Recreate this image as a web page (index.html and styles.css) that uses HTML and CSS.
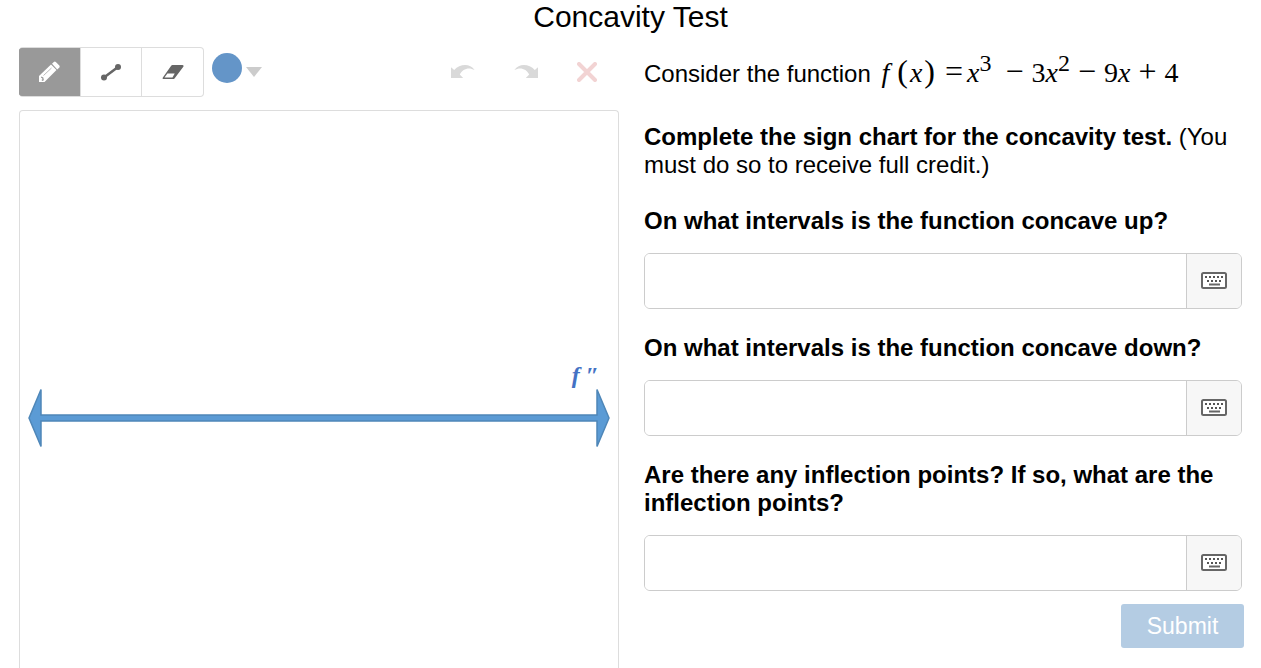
FILE: index.html
```html
<!DOCTYPE html>
<html lang="en">
<head>
    <meta charset="UTF-8">
    <meta name="viewport" content="width=device-width, initial-scale=1.0">
    <title>Concavity Test</title>
    <link rel="stylesheet" href="styles.css">
</head>
<body>
    <svg class="defs" aria-hidden="true">
        <symbol id="keyboard" viewBox="0 0 26 18">
            <rect x="1" y="1" width="24" height="15" rx="1.5" fill="#fff" stroke="#666" stroke-width="2"/>
            <path d="M4 5h18" stroke="#555" stroke-width="2" stroke-dasharray="2 2"/>
            <path d="M6 9h14" stroke="#555" stroke-width="2" stroke-dasharray="2 2"/>
            <path d="M8 12.5h11" stroke="#666" stroke-width="2"/>
        </symbol>
    </svg>

    <h1>Concavity Test</h1>

    <main class="columns">
        <section class="sketch">
            <div class="toolbar">
                <div class="tools">
                    <button type="button" class="tool active" aria-label="Pencil">
                        <svg width="22" height="22" viewBox="0 0 22 22">
                            <path d="M1 15 13 3.500 18.500 9 6.500 21H1z" fill="#fff"/>
                            <path d="M14 2.700 15.800 1q1-.8 2 0l3.500 3.500q.8 1 0 2l-2 2z" fill="#fff"/>
                            <path d="M5.500 14.500 13.500 7" stroke="#bbb" stroke-width="1"/>
                            <path d="m3.200 16 1.600 1 .4 1.800-1.400.6" fill="none" stroke="#999" stroke-width="1.200"/>
                        </svg>
                    </button>
                    <button type="button" class="tool" aria-label="Line">
                        <svg width="22" height="22" viewBox="0 0 22 22">
                            <path d="M4 16.500 18 6" stroke="#666" stroke-width="2.600"/>
                            <circle cx="4" cy="16.500" r="3" fill="#666"/>
                            <circle cx="18" cy="6" r="3" fill="#666"/>
                        </svg>
                    </button>
                    <button type="button" class="tool" aria-label="Eraser">
                        <svg width="22" height="22" viewBox="0 0 22 22">
                            <path d="M10.500 4h10q1.500 0 1 1.500L12.500 17.500Q12 18 11 18H1.500Q0 18 .7 16.700L9 5q.6-1 1.500-1z" fill="#666"/>
                            <path d="M5.400 12.500h7.300L10.500 16.500H2.500z" fill="#fff"/>
                        </svg>
                    </button>
                </div>
                <button type="button" class="color" aria-label="Color">
                    <span class="swatch"></span>
                    <span class="caret"></span>
                </button>
                <div class="history">
                    <button type="button" class="plain" aria-label="Undo">
                        <svg width="24" height="14" viewBox="0 0 24 14">
                            <path d="M0 2.300 3.200 5C9-1.300 19-1.800 23.600 5 18 1.700 11.500 3.600 8.800 9.500L12.200 13H0z" fill="#d9d9d9"/>
                        </svg>
                    </button>
                    <button type="button" class="plain" aria-label="Redo">
                        <svg width="24" height="14" viewBox="0 0 24 14">
                            <path d="M24 2.300 20.800 5C15-1.300 5-1.800.4 5 6 1.700 12.500 3.600 15.200 9.500L11.800 13H24z" fill="#d9d9d9"/>
                        </svg>
                    </button>
                    <button type="button" class="plain" aria-label="Clear">
                        <svg width="20" height="20" viewBox="0 0 20 20">
                            <path d="m2 2 16 16M18 2 2 18" stroke="#f2d3d3" stroke-width="4" stroke-linecap="round"/>
                        </svg>
                    </button>
                </div>
            </div>
            <div class="canvas">
                <div class="fn-label">f <span class="prime">″</span></div>
                <svg class="axis" viewBox="0 0 582 60" role="img" aria-label="Number line">
                    <path d="M1 30 13 1.500V27H569V1.500L581 30 569 58.500V33H13V58.500z" fill="#5b9bd5" stroke="#4f87b8" stroke-width="1.500"/>
                </svg>
            </div>
        </section>

        <form class="questions">
            <p class="prompt">Consider the function
                <span class="math"><i class="f">f</i><span class="paren">(</span><i>x</i><span class="paren">)</span><span class="op eq">=</span><i>x</i><sup>3</sup><span class="op wide">−</span>3<i>x</i><sup>2</sup><span class="op">−</span>9<i>x</i><span class="op">+</span>4</span>
            </p>
            <p class="directions"><b>Complete the sign chart for the concavity test.</b> (You must do so to receive full credit.)</p>

            <label for="up">On what intervals is the function concave up?</label>
            <div class="answer">
                <input type="text" id="up">
                <button type="button" aria-label="Keyboard"><svg width="26" height="18"><use href="#keyboard"/></svg></button>
            </div>

            <label for="down">On what intervals is the function concave down?</label>
            <div class="answer">
                <input type="text" id="down">
                <button type="button" aria-label="Keyboard"><svg width="26" height="18"><use href="#keyboard"/></svg></button>
            </div>

            <label for="points">Are there any inflection points? If so, what are the inflection points?</label>
            <div class="answer">
                <input type="text" id="points">
                <button type="button" aria-label="Keyboard"><svg width="26" height="18"><use href="#keyboard"/></svg></button>
            </div>

            <button type="submit" class="submit" disabled>Submit</button>
        </form>
    </main>
</body>
</html>
```

FILE: styles.css
```css
* {
    box-sizing: border-box;
}

body {
    display: flex;
    flex-direction: column;
    height: 100vh;
    margin: 0;
    overflow: hidden;
    background: #fff;
    color: #000;
    font-family: "Liberation Sans", Arial, sans-serif;
    font-size: 24px;
    line-height: 28px;
}

.defs {
    position: absolute;
    width: 0;
    height: 0;
}

h1 {
    margin: 0 0 13px;
    font-size: 30px;
    font-weight: normal;
    line-height: 34px;
    text-align: center;
}

button {
    padding: 0;
    border: none;
    background: none;
    font-family: inherit;
    cursor: pointer;
}

.columns {
    display: grid;
    grid-template-columns: 1fr 1fr;
    gap: 25px;
    flex: 1;
    padding: 0 17px 0 19px;
}

/* Drawing area */
.sketch {
    display: flex;
    flex-direction: column;
}

.toolbar {
    display: flex;
    align-items: flex-start;
    margin-bottom: 13px;
}

.tools {
    display: flex;
    width: 185px;
    height: 50px;
    border: 1px solid #ddd;
    border-left: none;
    border-radius: 4px;
    overflow: hidden;
}

.tool {
    display: flex;
    align-items: center;
    justify-content: center;
    flex: 1;
}

.tool + .tool {
    border-left: 1px solid #ddd;
}

.tool.active {
    background: #999;
    box-shadow: 0 0 0 1px #999;
}

.color {
    display: flex;
    align-items: center;
    gap: 4px;
    margin: 6px 0 0 8px;
}

.swatch {
    width: 30px;
    height: 30px;
    border-radius: 50%;
    background: #6495c8;
}

.caret {
    margin-top: 8px;
    border: 8px solid transparent;
    border-top: 10px solid #ccc;
    border-bottom: none;
}

.history {
    display: flex;
    align-items: center;
    gap: 39px;
    height: 50px;
    margin: 0 22px 0 auto;
}

.plain svg {
    display: block;
}

.canvas {
    flex: 1;
    border: 1px solid #ddd;
    border-bottom: none;
    border-radius: 4px 4px 0 0;
    padding: 252px 8px 0;
}

.fn-label {
    padding-right: 11px;
    color: #4472c4;
    font-family: "Liberation Serif", "Times New Roman", serif;
    font-size: 24px;
    font-style: italic;
    font-weight: bold;
    line-height: 25px;
    text-align: right;
}

.axis {
    display: block;
    width: 100%;
}

/* Questions */
.questions p {
    margin: 0;
}

.questions .prompt {
    height: 28px;
    margin: 13px 0 35px;
    white-space: nowrap;
}

.math {
    margin-left: 4px;
    font-family: "Liberation Serif", "Times New Roman", serif;
    font-size: 28px;
    line-height: 0;
}

.math .f {
    margin-right: 6px;
}

.math .paren {
    margin: 0 2px;
    font-size: 32px;
}

.math .op {
    margin: 0 8px;
    font-size: 32px;
}

.math .eq {
    margin-right: 4px;
}

.math .wide {
    margin-left: 14px;
}

.math sup {
    font-size: 24px;
    line-height: 0;
    vertical-align: 11px;
}

.questions .directions {
    margin-bottom: 28px;
}

label {
    display: block;
    font-weight: bold;
}

.answer {
    display: flex;
    height: 56px;
    margin: 18px 2px 25px 0;
    border: 1px solid #ccc;
    border-radius: 6px;
    overflow: hidden;
}

.answer input {
    flex: 1;
    min-width: 0;
    padding: 0 12px;
    border: none;
    background: #fff;
    font: inherit;
}

.answer button {
    display: flex;
    align-items: center;
    justify-content: center;
    width: 55px;
    border-left: 1px solid #ccc;
    background: #f7f7f7;
}

.submit {
    display: block;
    width: 123px;
    height: 44px;
    margin: -12px 0 0 auto;
    border-radius: 3px;
    background: #b4cce3;
    color: #fff;
    font-size: 23px;
    cursor: default;
}
```
